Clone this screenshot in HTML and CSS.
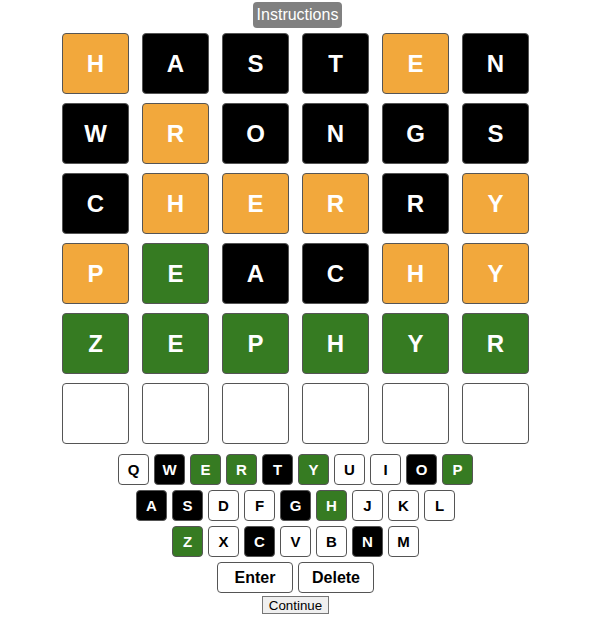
FILE: index.html
```html
<!DOCTYPE html>
<html>
<head>
<meta charset="utf-8">
<link rel="stylesheet" href="styles.css">
</head>
<body>
<div class="app">
  <button class="instructions">Instructions</button>
  <div class="board">
    <div class="tile y">H</div><div class="tile b">A</div><div class="tile b">S</div><div class="tile b">T</div><div class="tile y">E</div><div class="tile b">N</div>
    <div class="tile b">W</div><div class="tile y">R</div><div class="tile b">O</div><div class="tile b">N</div><div class="tile b">G</div><div class="tile b">S</div>
    <div class="tile b">C</div><div class="tile y">H</div><div class="tile y">E</div><div class="tile y">R</div><div class="tile b">R</div><div class="tile y">Y</div>
    <div class="tile y">P</div><div class="tile g">E</div><div class="tile b">A</div><div class="tile b">C</div><div class="tile y">H</div><div class="tile y">Y</div>
    <div class="tile g">Z</div><div class="tile g">E</div><div class="tile g">P</div><div class="tile g">H</div><div class="tile g">Y</div><div class="tile g">R</div>
    <div class="tile"></div><div class="tile"></div><div class="tile"></div><div class="tile"></div><div class="tile"></div><div class="tile"></div>
  </div>
  <div class="keyboard">
    <div class="krow">
      <div class="key">Q</div><div class="key b">W</div><div class="key g">E</div><div class="key g">R</div><div class="key b">T</div><div class="key g">Y</div><div class="key">U</div><div class="key">I</div><div class="key b">O</div><div class="key g">P</div>
    </div>
    <div class="krow">
      <div class="key b">A</div><div class="key b">S</div><div class="key">D</div><div class="key">F</div><div class="key b">G</div><div class="key g">H</div><div class="key">J</div><div class="key">K</div><div class="key">L</div>
    </div>
    <div class="krow">
      <div class="key g">Z</div><div class="key">X</div><div class="key b">C</div><div class="key">V</div><div class="key">B</div><div class="key b">N</div><div class="key">M</div>
    </div>
    <div class="krow">
      <div class="key wide">Enter</div><div class="key wide">Delete</div>
    </div>
  </div>
  <button class="continue">Continue</button>
</div>
</body>
</html>
```

FILE: styles.css
```css
html, body {
  margin: 0;
  padding: 0;
  background: #ffffff;
}
.app {
  display: flex;
  flex-direction: column;
  align-items: center;
  padding: 2px 4px 0 0;
  font-family: "Liberation Sans", Arial, sans-serif;
}
.instructions {
  font-family: "Liberation Sans", Arial, sans-serif;
  font-size: 16px;
  color: #ffffff;
  background: #808080;
  border: none;
  border-radius: 4px;
  height: 26px;
  padding: 0 4px;
  margin: 0 0 0 4px;
}
.board {
  display: grid;
  grid-template-columns: repeat(6, 67px);
  grid-auto-rows: 61px;
  column-gap: 13px;
  row-gap: 9px;
  margin-top: 5px;
}
.tile {
  box-sizing: border-box;
  border: 1px solid #555555;
  border-radius: 4px;
  background: #ffffff;
  display: flex;
  align-items: center;
  justify-content: center;
  font-weight: bold;
  font-size: 24px;
  color: #ffffff;
}
.tile.y { background: #f2a83c; }
.tile.b { background: #000000; }
.tile.g { background: #367b22; }
.keyboard {
  display: flex;
  flex-direction: column;
  align-items: center;
  gap: 5px;
  margin-top: 10px;
}
.krow {
  display: flex;
  gap: 5px;
}
.key {
  box-sizing: border-box;
  width: 31px;
  height: 31px;
  border: 1px solid #555555;
  border-radius: 4px;
  background: #ffffff;
  color: #000000;
  display: flex;
  align-items: center;
  justify-content: center;
  font-weight: bold;
  font-size: 15px;
}
.key.b { background: #000000; color: #ffffff; }
.key.g { background: #367b22; color: #ffffff; }
.key.wide {
  width: 76px;
  font-size: 16px;
}
.continue {
  margin-top: 3px;
  font-family: "Liberation Sans", Arial, sans-serif;
  font-size: 13.33px;
  height: 18px;
  padding: 0 6px;
  background: #efefef;
  border: 1px solid #767676;
  border-radius: 0;
  color: #000000;
}
```
